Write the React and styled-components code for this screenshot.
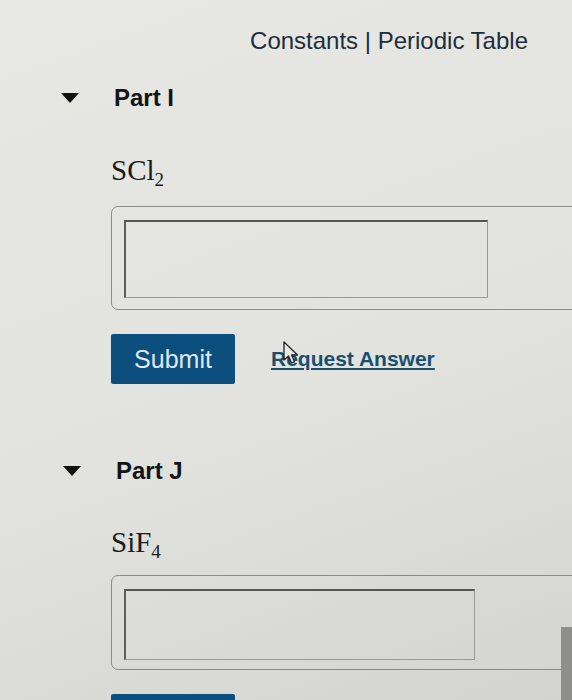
import React from "react";
import styled, { createGlobalStyle } from "styled-components";

const GlobalStyle = createGlobalStyle`
  html, body {
    margin: 0;
    padding: 0;
    overflow: hidden;
  }
  body {
    background: linear-gradient(160deg, #e7e8e4 0%, #e2e3df 55%, #d3d4d0 100%);
    font-family: "Liberation Sans", Arial, sans-serif;
    min-height: 700px;
  }
`;

const Page = styled.div`
  width: 572px;
  height: 700px;
  padding-top: 27px;
  box-sizing: border-box;
  overflow: hidden;
`;

const TopLinks = styled.div`
  display: flex;
  justify-content: flex-end;
  padding-right: 44px;
  font-size: 24px;
  line-height: 28px;
  color: #1d2d3c;
`;

const Section = styled.section`
  margin-top: ${(p) => p.$top}px;
`;

const PartHeader = styled.div`
  display: flex;
  align-items: center;
  gap: 35px;
  padding-left: ${(p) => p.$indent}px;
  font-size: 24px;
  font-weight: bold;
  line-height: 28px;
  color: #141414;
`;

const Caret = styled.svg`
  width: 18px;
  height: 10px;
  flex: none;
`;

const Body = styled.div`
  padding-left: 111px;
`;

const Formula = styled.div`
  margin-top: ${(p) => p.$top}px;
  font-family: "Liberation Serif", "Times New Roman", serif;
  font-size: 29px;
  line-height: 33px;
  color: #1b1b1b;

  sub {
    font-size: 19px;
    line-height: 0;
    vertical-align: -6px;
  }
`;

const AnswerFrame = styled.div`
  margin-top: ${(p) => p.$top}px;
  margin-right: -20px;
  border: 1px solid #8b8c89;
  border-radius: 7px;
  padding: 13px 0 ${(p) => p.$bottom}px 12px;
`;

const AnswerInput = styled.div`
  width: ${(p) => p.$w}px;
  height: ${(p) => p.$h}px;
  box-sizing: border-box;
  border: 1px solid #9a9b98;
  border-top: 2px solid #555653;
  border-left: 2px solid #5d5e5b;
`;

const Actions = styled.div`
  display: flex;
  align-items: center;
  gap: 36px;
  margin-top: 24px;
`;

const SubmitButton = styled.button`
  width: 124px;
  height: 50px;
  border: none;
  border-radius: 2px;
  background: #0c4f7e;
  color: #dfe9f1;
  font-family: "Liberation Sans", Arial, sans-serif;
  font-size: 25px;
  padding: 0;
`;

const LinkWrap = styled.span`
  position: relative;
  display: inline-block;
`;

const RequestLink = styled.a`
  font-size: 21px;
  font-weight: bold;
  color: #17506f;
  text-decoration: underline;
  text-underline-offset: 2px;
`;

const Pointer = styled.svg`
  position: absolute;
  left: 12px;
  top: -6px;
  width: 16px;
  height: 24px;
`;

const ScrollThumb = styled.div`
  position: fixed;
  right: 0;
  top: 627px;
  width: 11px;
  height: 80px;
  background: #8e8f8c;
`;

const parts = [
  {
    label: "Part I",
    formula: ["SCl", "2"],
    top: 29,
    indent: 61,
    formulaTop: 42,
    frameTop: 19,
    frameBottom: 11,
    w: 364,
    h: 78,
    request: true,
  },
  {
    label: "Part J",
    formula: ["SiF", "4"],
    top: 73,
    indent: 63,
    formulaTop: 41,
    frameTop: 16,
    frameBottom: 9,
    w: 351,
    h: 71,
  },
];

export default function App() {
  return (
    <>
      <GlobalStyle />
      <Page>
        <TopLinks>Constants | Periodic Table</TopLinks>
        {parts.map((part) => (
          <Section key={part.label} $top={part.top}>
            <PartHeader $indent={part.indent}>
              <Caret viewBox="0 0 18 10">
                <path d="M0 0 H18 L9 10 Z" fill="#111" />
              </Caret>
              {part.label}
            </PartHeader>
            <Body>
              <Formula $top={part.formulaTop}>
                {part.formula[0]}
                <sub>{part.formula[1]}</sub>
              </Formula>
              <AnswerFrame $top={part.frameTop} $bottom={part.frameBottom}>
                <AnswerInput $w={part.w} $h={part.h} />
              </AnswerFrame>
              <Actions>
                <SubmitButton>{part.request ? "Submit" : ""}</SubmitButton>
                {part.request && (
                  <LinkWrap>
                    <RequestLink>Request Answer</RequestLink>
                    <Pointer viewBox="0 0 16 24">
                      <path
                        d="M1 1 L1 19 L5.5 15 L8.5 22 L11.5 20.8 L8.6 14 L14.5 14 Z"
                        fill="#e8ebe8"
                        stroke="#222"
                        strokeWidth="1.3"
                        strokeLinejoin="round"
                      />
                    </Pointer>
                  </LinkWrap>
                )}
              </Actions>
            </Body>
          </Section>
        ))}
        <ScrollThumb />
      </Page>
    </>
  );
}
